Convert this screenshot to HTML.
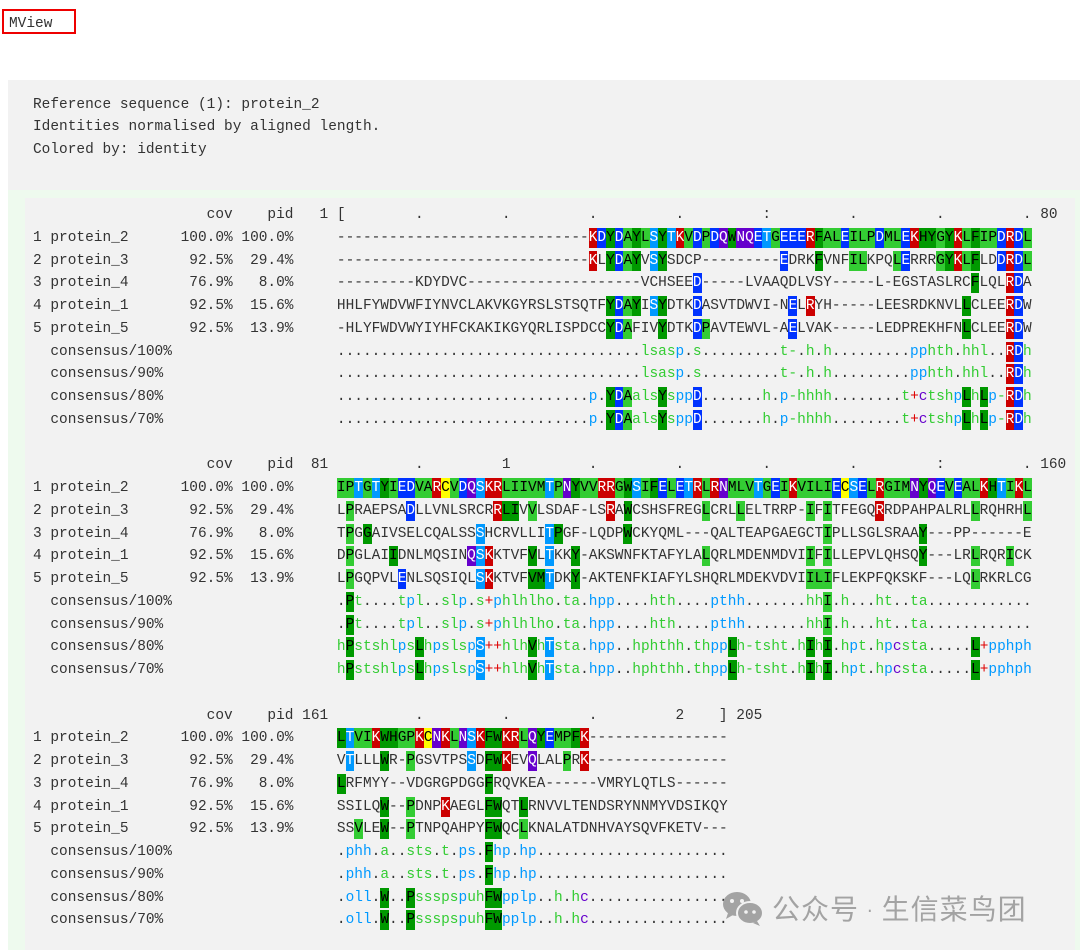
<!DOCTYPE html>
<html><head><meta charset="utf-8">
<style>
html,body{margin:0;padding:0;background:#fff;width:1080px;height:950px;overflow:hidden;position:relative}
*{font-family:"Liberation Mono",monospace}
.mv{position:absolute;left:2px;top:9px;width:70px;height:21px;border:2px solid #e00;box-sizing:content-box}
.mv span{position:absolute;left:5px;top:5px;font-size:14.47px;line-height:17px;color:#333}
.outer{position:absolute;left:8px;top:80px;width:1072px;height:870px;background:#f2f2f2}
.green{position:absolute;left:8px;top:190px;width:1072px;height:760px;background:#eefaee}
.inner{position:absolute;left:25px;top:198px;width:1050px;height:752px;background:#f2f2f2}
pre{position:absolute;margin:0;font-size:14.47px;line-height:22.75px;color:#333;white-space:pre}
.top{left:33px;top:93.5px}
.aln{left:33px;top:204px}
i{font-style:normal;padding:2px 0}
i.g{background:#33cc33;color:#000}
i.G{background:#009900;color:#000}
i.b{background:#0033ff;color:#fff}
i.r{background:#cc0000;color:#fff}
i.c{background:#0099ff;color:#fff}
i.p{background:#6600cc;color:#fff}
i.y{background:#ffff00;color:#000}
i.tg{color:#33cc33;padding:0}
i.tb{color:#0099ff;padding:0}
i.tr{color:#dd0000;padding:0}
i.tp{color:#6600cc;padding:0}
.wm{position:absolute;left:772px;top:888px;font-family:"Noto Sans CJK SC",sans-serif;font-size:28px;line-height:40px;color:#a3a3a3;letter-spacing:1px}
.wm span{font-size:16px;vertical-align:middle;padding:0 6px}
.wic{position:absolute;left:720px;top:888px}
</style></head><body>
<div class="mv"><span>MView</span></div>
<div class="outer"></div>
<div class="green"></div>
<div class="inner"></div>
<pre class="top">Reference sequence (1): protein_2
Identities normalised by aligned length.
Colored by: identity</pre>
<pre class="aln">                    cov    pid   1 [        .         .         .         .         :         .         .         . 80
1 protein_2      100.0% 100.0%     -----------------------------<i class=r>K</i><i class=b>D</i><i class=G>Y</i><i class=b>D</i><i class=g>A</i><i class=G>Y</i><i class=g>L</i><i class=c>S</i><i class=G>Y</i><i class=c>T</i><i class=r>K</i><i class=g>V</i><i class=b>D</i><i class=g>P</i><i class=b>D</i><i class=p>Q</i><i class=G>W</i><i class=p>NQ</i><i class=b>E</i><i class=c>T</i><i class=g>G</i><i class=b>EEE</i><i class=r>R</i><i class=G>F</i><i class=g>AL</i><i class=b>E</i><i class=g>ILP</i><i class=b>D</i><i class=g>ML</i><i class=b>E</i><i class=r>K</i><i class=G>HY</i><i class=g>G</i><i class=G>Y</i><i class=r>K</i><i class=g>L</i><i class=G>F</i><i class=g>IP</i><i class=b>D</i><i class=r>R</i><i class=b>D</i><i class=g>L</i>
2 protein_3       92.5%  29.4%     -----------------------------<i class=r>K</i>L<i class=G>Y</i><i class=b>D</i><i class=g>A</i><i class=G>Y</i>V<i class=c>S</i><i class=G>Y</i>SDCP---------<i class=b>E</i>DRK<i class=G>F</i>VNF<i class=g>IL</i>KPQ<i class=g>L</i><i class=b>E</i>RRR<i class=g>G</i><i class=G>Y</i><i class=r>K</i><i class=g>L</i><i class=G>F</i>LD<i class=b>D</i><i class=r>R</i><i class=b>D</i><i class=g>L</i>
3 protein_4       76.9%   8.0%     ---------KDYDVC--------------------VCHSEE<i class=b>D</i>-----LVAAQDLVSY-----L-EGSTASLRC<i class=G>F</i>LQL<i class=r>R</i><i class=b>D</i>A
4 protein_1       92.5%  15.6%     HHLFYWDVWFIYNVCLAKVKGYRSLSTSQTF<i class=G>Y</i><i class=b>D</i><i class=g>A</i><i class=G>Y</i>I<i class=c>S</i><i class=G>Y</i>DTK<i class=b>D</i>ASVTDWVI-N<i class=b>E</i>L<i class=r>R</i>YH-----LEESRDKNVL<i class=G>L</i>CLEE<i class=r>R</i><i class=b>D</i>W
5 protein_5       92.5%  13.9%     -HLYFWDVWYIYHFCKAKIKGYQRLISPDCC<i class=G>Y</i><i class=b>D</i><i class=g>A</i>FIV<i class=G>Y</i>DTK<i class=b>D</i><i class=g>P</i>AVTEWVL-A<i class=b>E</i>LVAK-----LEDPREKHFN<i class=G>L</i>CLEE<i class=r>R</i><i class=b>D</i>W
  consensus/100%                   ...................................<i class=tg>lsas</i><i class=tb>p</i>.<i class=tg>s</i>.........<i class=tg>t-</i>.<i class=tg>h</i>.<i class=tg>h</i>.........<i class=tb>pp</i><i class=tg>hth</i>.<i class=tg>hhl</i>..<i class=r>R</i><i class=b>D</i><i class=tg>h</i>
  consensus/90%                    ...................................<i class=tg>lsas</i><i class=tb>p</i>.<i class=tg>s</i>.........<i class=tg>t-</i>.<i class=tg>h</i>.<i class=tg>h</i>.........<i class=tb>pp</i><i class=tg>hth</i>.<i class=tg>hhl</i>..<i class=r>R</i><i class=b>D</i><i class=tg>h</i>
  consensus/80%                    .............................<i class=tb>p</i>.<i class=G>Y</i><i class=b>D</i><i class=g>A</i><i class=tg>als</i><i class=G>Y</i><i class=tg>s</i><i class=tb>pp</i><i class=b>D</i>.......<i class=tg>h</i>.<i class=tb>p</i><i class=tg>-hhhh</i>........<i class=tg>t</i><i class=tr>+</i><i class=tp>c</i><i class=tg>tsh</i><i class=tb>p</i><i class=G>L</i><i class=tg>h</i><i class=G>L</i><i class=tb>p</i><i class=tg>-</i><i class=r>R</i><i class=b>D</i><i class=tg>h</i>
  consensus/70%                    .............................<i class=tb>p</i>.<i class=G>Y</i><i class=b>D</i><i class=g>A</i><i class=tg>als</i><i class=G>Y</i><i class=tg>s</i><i class=tb>pp</i><i class=b>D</i>.......<i class=tg>h</i>.<i class=tb>p</i><i class=tg>-hhhh</i>........<i class=tg>t</i><i class=tr>+</i><i class=tp>c</i><i class=tg>tsh</i><i class=tb>p</i><i class=G>L</i><i class=tg>h</i><i class=G>L</i><i class=tb>p</i><i class=tg>-</i><i class=r>R</i><i class=b>D</i><i class=tg>h</i>

                    cov    pid  81          .         1         .         .         .         .         :         . 160
1 protein_2      100.0% 100.0%     <i class=g>IP</i><i class=c>T</i><i class=g>G</i><i class=c>T</i><i class=G>Y</i><i class=g>I</i><i class=b>ED</i><i class=g>VA</i><i class=r>R</i><i class=y>C</i><i class=g>V</i><i class=b>D</i><i class=p>Q</i><i class=c>S</i><i class=r>KR</i><i class=g>LIIVM</i><i class=c>T</i><i class=g>P</i><i class=p>N</i><i class=G>Y</i><i class=g>VV</i><i class=r>RR</i><i class=g>G</i><i class=G>W</i><i class=c>S</i><i class=g>I</i><i class=G>F</i><i class=b>E</i><i class=g>L</i><i class=b>E</i><i class=c>T</i><i class=r>R</i><i class=g>L</i><i class=r>R</i><i class=p>N</i><i class=g>MLV</i><i class=c>T</i><i class=g>G</i><i class=b>E</i><i class=g>I</i><i class=r>K</i><i class=g>VILI</i><i class=b>E</i><i class=y>C</i><i class=c>S</i><i class=b>E</i><i class=g>L</i><i class=r>R</i><i class=g>GIM</i><i class=p>N</i><i class=G>Y</i><i class=p>Q</i><i class=b>E</i><i class=g>V</i><i class=b>E</i><i class=g>AL</i><i class=r>K</i><i class=G>H</i><i class=c>T</i><i class=g>I</i><i class=r>K</i><i class=g>L</i>
2 protein_3       92.5%  29.4%     L<i class=g>P</i>RAEPSA<i class=b>D</i>LLVNLSRCR<i class=r>R</i><i class=G>LI</i>V<i class=g>V</i>LSDAF-LS<i class=r>R</i>A<i class=G>W</i>CSHSFREG<i class=g>L</i>CRL<i class=g>L</i>ELTRRP-<i class=g>I</i>F<i class=g>I</i>TFEGQ<i class=r>R</i>RDPAHPALRL<i class=g>L</i>RQHRH<i class=g>L</i>
3 protein_4       76.9%   8.0%     T<i class=g>P</i>G<i class=G>G</i>AIVSELCQALSS<i class=c>S</i>HCRVLLI<i class=c>T</i><i class=G>P</i>GF-LQDP<i class=G>W</i>CKYQML---QALTEAPGAEGCT<i class=g>I</i>PLLSGLSRAA<i class=G>Y</i>---PP------E
4 protein_1       92.5%  15.6%     D<i class=g>P</i>GLAI<i class=G>I</i>DNLMQSIN<i class=p>Q</i><i class=c>S</i><i class=r>K</i>KTVF<i class=G>V</i>L<i class=c>T</i>KK<i class=G>Y</i>-AKSWNFKTAFYLA<i class=g>L</i>QRLMDENMDVI<i class=g>I</i>F<i class=g>I</i>LLEPVLQHSQ<i class=G>Y</i>---LR<i class=g>L</i>RQR<i class=g>I</i>CK
5 protein_5       92.5%  13.9%     L<i class=g>P</i>GQPVL<i class=b>E</i>NLSQSIQL<i class=c>S</i><i class=r>K</i>KTVF<i class=G>VM</i><i class=c>T</i>DK<i class=G>Y</i>-AKTENFKIAFYLSHQRLMDEKVDVI<i class=g>ILI</i>FLEKPFQKSKF---LQ<i class=g>L</i>RKRLCG
  consensus/100%                   .<i class=G>P</i><i class=tg>t</i>....<i class=tg>t</i><i class=tb>p</i><i class=tg>l</i>..<i class=tg>sl</i><i class=tb>p</i>.<i class=tg>s</i><i class=tr>+</i><i class=tb>p</i><i class=tg>hlhlho</i>.<i class=tg>ta</i>.<i class=tb>hpp</i>....<i class=tg>hth</i>....<i class=tb>pthh</i>.......<i class=tg>hh</i><i class=g>I</i>.<i class=tg>h</i>...<i class=tg>ht</i>..<i class=tg>ta</i>............
  consensus/90%                    .<i class=G>P</i><i class=tg>t</i>....<i class=tg>t</i><i class=tb>p</i><i class=tg>l</i>..<i class=tg>sl</i><i class=tb>p</i>.<i class=tg>s</i><i class=tr>+</i><i class=tb>p</i><i class=tg>hlhlho</i>.<i class=tg>ta</i>.<i class=tb>hpp</i>....<i class=tg>hth</i>....<i class=tb>pthh</i>.......<i class=tg>hh</i><i class=g>I</i>.<i class=tg>h</i>...<i class=tg>ht</i>..<i class=tg>ta</i>............
  consensus/80%                    <i class=tg>h</i><i class=G>P</i><i class=tg>stshl</i><i class=tb>p</i><i class=tg>s</i><i class=G>L</i><i class=tg>h</i><i class=tb>p</i><i class=tg>sls</i><i class=tb>p</i><i class=c>S</i><i class=tr>++</i><i class=tg>hlh</i><i class=G>V</i><i class=tg>h</i><i class=c>T</i><i class=tg>sta</i>.<i class=tb>hpp</i>..<i class=tg>hphthh</i>.<i class=tg>th</i><i class=tb>pp</i><i class=G>L</i><i class=tg>h-tsht</i>.<i class=tg>h</i><i class=G>I</i><i class=tg>h</i><i class=G>I</i>.<i class=tg>h</i><i class=tb>p</i><i class=tg>t</i>.<i class=tg>h</i><i class=tb>p</i><i class=tp>c</i><i class=tg>sta</i>.....<i class=G>L</i><i class=tr>+</i><i class=tb>pphph</i>
  consensus/70%                    <i class=tg>h</i><i class=G>P</i><i class=tg>stshl</i><i class=tb>p</i><i class=tg>s</i><i class=G>L</i><i class=tg>h</i><i class=tb>p</i><i class=tg>sls</i><i class=tb>p</i><i class=c>S</i><i class=tr>++</i><i class=tg>hlh</i><i class=G>V</i><i class=tg>h</i><i class=c>T</i><i class=tg>sta</i>.<i class=tb>hpp</i>..<i class=tg>hphthh</i>.<i class=tg>th</i><i class=tb>pp</i><i class=G>L</i><i class=tg>h-tsht</i>.<i class=tg>h</i><i class=G>I</i><i class=tg>h</i><i class=G>I</i>.<i class=tg>h</i><i class=tb>p</i><i class=tg>t</i>.<i class=tg>h</i><i class=tb>p</i><i class=tp>c</i><i class=tg>sta</i>.....<i class=G>L</i><i class=tr>+</i><i class=tb>pphph</i>

                    cov    pid 161          .         .         .         2    ] 205
1 protein_2      100.0% 100.0%     <i class=G>L</i><i class=c>T</i><i class=g>VI</i><i class=r>K</i><i class=G>WH</i><i class=g>GP</i><i class=r>K</i><i class=y>C</i><i class=p>N</i><i class=r>K</i><i class=g>L</i><i class=p>N</i><i class=c>S</i><i class=r>K</i><i class=G>FW</i><i class=r>KR</i><i class=g>L</i><i class=p>Q</i><i class=G>Y</i><i class=b>E</i><i class=g>MP</i><i class=G>F</i><i class=r>K</i>----------------
2 protein_3       92.5%  29.4%     V<i class=c>T</i>LLL<i class=G>W</i>R-<i class=g>P</i>GSVTPS<i class=c>S</i>D<i class=G>FW</i><i class=r>K</i>EV<i class=p>Q</i>LAL<i class=g>P</i>R<i class=r>K</i>----------------
3 protein_4       76.9%   8.0%     <i class=G>L</i>RFMYY--VDGRGPDGG<i class=G>F</i>RQVKEA------VMRYLQTLS------
4 protein_1       92.5%  15.6%     SSILQ<i class=G>W</i>--<i class=g>P</i>DNP<i class=r>K</i>AEGL<i class=G>FW</i>QT<i class=G>L</i>RNVVLTENDSRYNNMYVDSIKQY
5 protein_5       92.5%  13.9%     SS<i class=g>V</i>LE<i class=G>W</i>--<i class=g>P</i>TNPQAHPY<i class=G>FW</i>QC<i class=g>L</i>KNALATDNHVAYSQVFKETV---
  consensus/100%                   .<i class=tb>phh</i>.<i class=tg>a</i>..<i class=tg>sts</i>.<i class=tg>t</i>.<i class=tb>ps</i>.<i class=G>F</i><i class=tb>hp</i>.<i class=tb>hp</i>......................
  consensus/90%                    .<i class=tb>phh</i>.<i class=tg>a</i>..<i class=tg>sts</i>.<i class=tg>t</i>.<i class=tb>ps</i>.<i class=G>F</i><i class=tb>hp</i>.<i class=tb>hp</i>......................
  consensus/80%                    .<i class=tb>oll</i>.<i class=G>W</i>..<i class=G>P</i><i class=tg>sssps</i><i class=tb>p</i><i class=tg>uh</i><i class=G>FW</i><i class=tb>pplp</i>..<i class=tg>h</i>.<i class=tg>h</i><i class=tp>c</i>................
  consensus/70%                    .<i class=tb>oll</i>.<i class=G>W</i>..<i class=G>P</i><i class=tg>sssps</i><i class=tb>p</i><i class=tg>uh</i><i class=G>FW</i><i class=tb>pplp</i>..<i class=tg>h</i>.<i class=tg>h</i><i class=tp>c</i>................</pre>
<svg class="wic" width="46" height="40" viewBox="0 0 46 40">
<ellipse cx="17" cy="16" rx="14" ry="12" fill="#a3a3a3"/>
<path d="M8 25 L6 31 L13 27 Z" fill="#a3a3a3"/>
<ellipse cx="30" cy="25" rx="13" ry="11" fill="#a3a3a3" stroke="#f2f2f2" stroke-width="2"/>
<path d="M37 33 L40 38 L33 35 Z" fill="#a3a3a3"/>
<circle cx="12" cy="13" r="2" fill="#f2f2f2"/><circle cx="22" cy="13" r="2" fill="#f2f2f2"/>
<circle cx="26" cy="24" r="1.8" fill="#f2f2f2"/><circle cx="34" cy="24" r="1.8" fill="#f2f2f2"/>
</svg>
<div class="wm">公众号<span>·</span>生信菜鸟团</div>
</body></html>
